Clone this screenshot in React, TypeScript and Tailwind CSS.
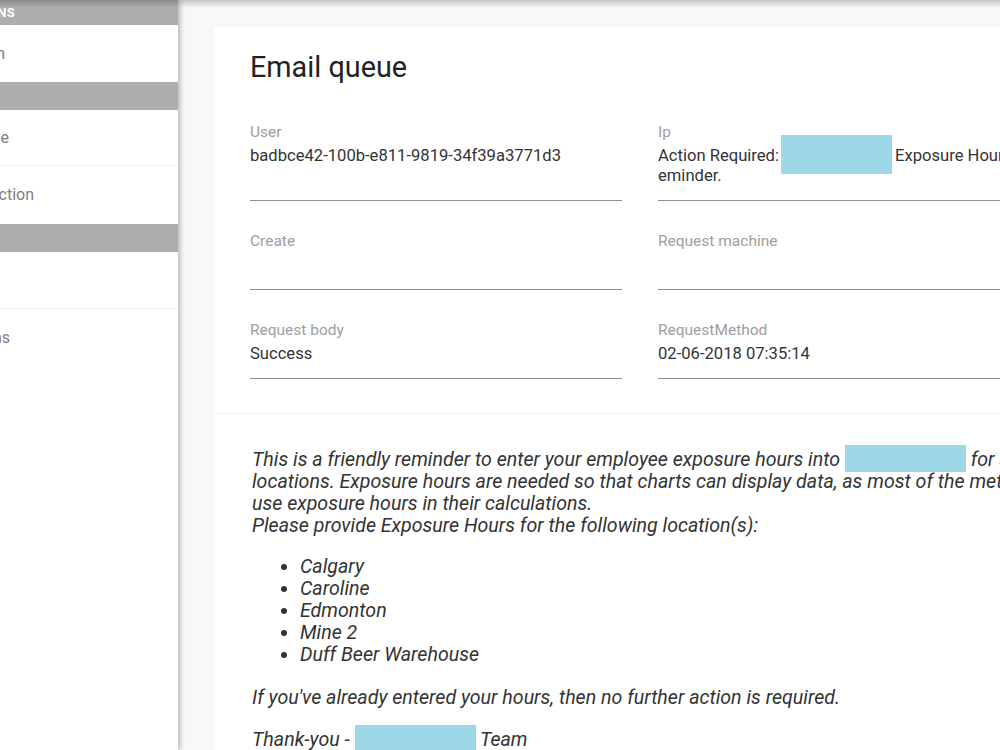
import React from 'react';

const font = { fontFamily: 'Roboto, "Noto Sans", Arial, sans-serif' };

type NavEntry = { kind: 'header' | 'item'; label: string; end: number; h: string; divider?: boolean };

// the sidebar is scrolled sideways, so only the tail of each label shows
const nav: NavEntry[] = [
  { kind: 'header', label: 'NOTIFICATIONS', end: 15, h: 'h-[25px]' },
  { kind: 'item', label: 'Administration', end: 5, h: 'h-[57px]' },
  { kind: 'header', label: 'EMAILS', end: 0, h: 'h-[28px]' },
  { kind: 'item', label: 'Email queue', end: 9, h: 'h-[56px]', divider: true },
  { kind: 'item', label: 'Email instruction', end: 34, h: 'h-[58px]' },
  { kind: 'header', label: 'LOGS', end: 0, h: 'h-[28px]' },
  { kind: 'item', label: '', end: 0, h: 'h-[57px]', divider: true },
  { kind: 'item', label: 'Locations', end: 10, h: 'h-[57px]' },
];

function Sidebar() {
  return (
    <aside className="relative z-10 w-[178px] shrink-0 bg-white shadow-[2px_0_5px_rgba(0,0,0,0.28)]">
      {nav.map((n, i) =>
        n.kind === 'header' ? (
          <div key={i} className={`flex items-center justify-end overflow-hidden bg-[#aeaeae] ${n.h}`} style={{ paddingRight: 178 - n.end }}>
            <span className="whitespace-nowrap text-[13px] font-bold tracking-wide text-white">{n.end > 0 ? n.label : ''}</span>
          </div>
        ) : (
          <div
            key={i}
            className={`flex items-center justify-end overflow-hidden ${n.h} ${n.divider ? 'border-b border-[#eeeeee]' : ''}`}
            style={{ paddingRight: 178 - n.end }}
          >
            <span className="whitespace-nowrap text-[16px] text-[#808080]">{n.label}</span>
          </div>
        ),
      )}
    </aside>
  );
}

function Redacted({ className }: { className: string }) {
  return <span className={`inline-block bg-[#9dd8e9] align-middle ${className}`} />;
}

function Field({ label, children }: { label: string; children?: React.ReactNode }) {
  return (
    <div className="border-b border-[#8c8c8c] pt-[30px] pb-[14px]">
      <div className="text-[15.5px] leading-[20px] text-[#9e9e9e]">{label}</div>
      <div className="mt-[4px] min-h-[20px] text-[16.6px] leading-[20px] text-[#333333]">{children}</div>
    </div>
  );
}

export default function App() {
  const locations = ['Calgary', 'Caroline', 'Edmonton', 'Mine 2', 'Duff Beer Warehouse'];

  return (
    <div className="relative flex h-[750px] w-[1000px] overflow-hidden bg-[#f8f8f8]" style={font}>
      {/* shadow from the app bar above */}
      <div className="pointer-events-none absolute inset-x-0 top-0 z-20 h-[8px] bg-gradient-to-b from-black/20 to-transparent" />

      <Sidebar />

      <main className="flex-1 pl-[36px] pt-[27px]">
        <div className="w-[850px] bg-white">
          <div className="px-[36px] pt-[22px] pb-[34px]">
            <h1 className="mb-[7px] text-[28.8px] leading-[36px] font-normal text-[#222222]">Email queue</h1>
            <div className="grid grid-cols-[372px_372px] gap-x-[36px]">
              <Field label="User">badbce42-100b-e811-9819-34f39a3771d3</Field>
              <Field label="Ip">
                <span className="whitespace-nowrap">
                  Action Required:<Redacted className="-mt-[12px] -mb-[8px] ml-[2px] mr-[3px] h-[39px] w-[111px]" />Exposure Hours R
                </span>
                <br />
                eminder.
              </Field>
              <Field label="Create" />
              <Field label="Request machine" />
              <Field label="Request body">Success</Field>
              <Field label="RequestMethod">02-06-2018 07:35:14</Field>
            </div>
          </div>

          <div className="border-t border-[#eeeeee] px-[38px] pt-[35px] pb-[40px] text-[19.6px] leading-[22px] text-[#333333] italic">
            <p className="whitespace-nowrap">
              This is a friendly reminder to enter your employee exposure hours into{' '}
              <Redacted className="-mt-[6px] -mb-[2px] h-[27px] w-[121px]" /> for all of your
              <br />
              locations. Exposure hours are needed so that charts can display data, as most of the metrics
              <br />
              use exposure hours in their calculations.
              <br />
              Please provide Exposure Hours for the following location(s):
            </p>
            <ul className="mt-[19px] mb-[21px] list-disc pl-[48px]">
              {locations.map((l) => (
                <li key={l}>{l}</li>
              ))}
            </ul>
            <p>If you've already entered your hours, then no further action is required.</p>
            <p className="mt-[20px] whitespace-nowrap">
              Thank-you - <Redacted className="-mt-[6px] -mb-[2px] h-[27px] w-[121px]" /> Team
            </p>
          </div>
        </div>
      </main>
    </div>
  );
}
